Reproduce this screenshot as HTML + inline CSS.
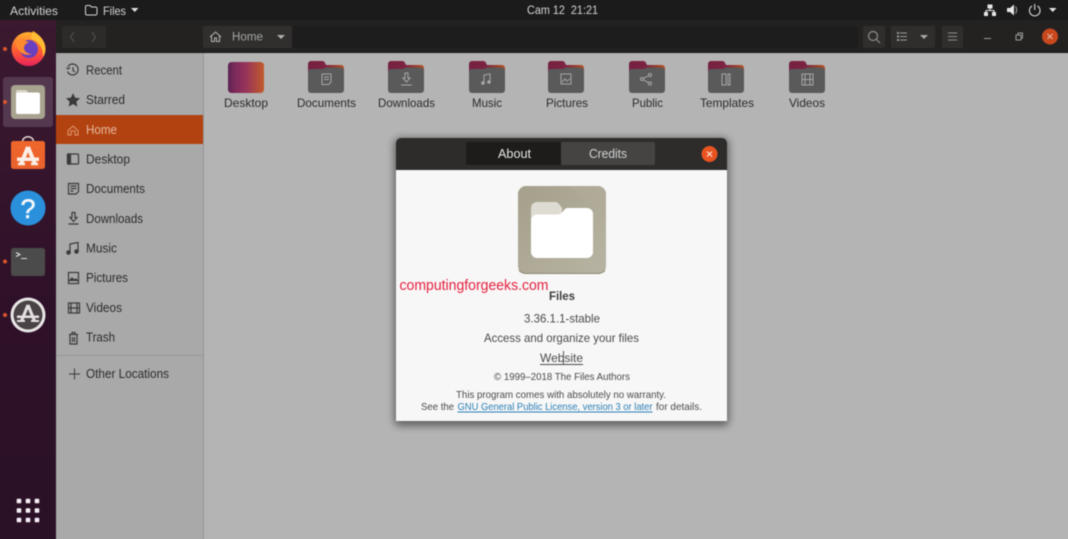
<!DOCTYPE html>
<html><head><meta charset="utf-8"><style>
html,body{margin:0;padding:0;width:1068px;height:539px;overflow:hidden;background:#b4b4b4}
#w{position:relative;width:1068px;height:539px;overflow:hidden;contain:strict}
svg{display:block;position:absolute;left:-10px;top:-10px;font-family:"Liberation Sans",sans-serif;filter:blur(.4px)}
text{white-space:pre}
.s text{font-size:12.5px;fill:#2c2c2c}
.f text{font-size:12px;fill:#2b2b2b;text-anchor:middle}
.ic{fill:none;stroke:#3a3a3a;stroke-width:1.2}
.fi{fill:none;stroke:#a8a8a8;stroke-width:1}
</style></head><body><div id="w">
<svg width="1088" height="559" viewBox="-10 -10 1088 559" xmlns="http://www.w3.org/2000/svg">
<defs>
<linearGradient id="dock" x1="0" y1="0" x2="0" y2="1"><stop offset="0" stop-color="#3b1a30"/><stop offset=".5" stop-color="#2f1129"/><stop offset="1" stop-color="#2a1126"/></linearGradient>
<linearGradient id="desk" x1="0" y1="0" x2="1" y2="0"><stop offset="0" stop-color="#5c2352"/><stop offset=".2" stop-color="#7d2a5b"/><stop offset=".5" stop-color="#96345a"/><stop offset="1" stop-color="#c25a2b"/></linearGradient>
<linearGradient id="tab" x1="0" y1="0" x2="1" y2="0"><stop offset="0" stop-color="#752043"/><stop offset=".5" stop-color="#7c2540"/><stop offset="1" stop-color="#b4521f"/></linearGradient>
<linearGradient id="ffx" x1="0" y1="0" x2="0" y2="1"><stop offset="0" stop-color="#ffb12e"/><stop offset=".55" stop-color="#ff5a32"/><stop offset="1" stop-color="#e8245c"/></linearGradient>
<linearGradient id="tile" x1="0" y1="0" x2="1" y2="1"><stop offset="0" stop-color="#a5a08b"/><stop offset="1" stop-color="#b8b4a3"/></linearGradient>
<linearGradient id="shop" x1="0" y1="0" x2="0" y2="1"><stop offset="0" stop-color="#f0672c"/><stop offset="1" stop-color="#e9622c"/></linearGradient>
<filter id="sh" x="-10%" y="-10%" width="120%" height="120%"><feGaussianBlur stdDeviation="4"/></filter>
<g id="folder">
<path d="M0 4a3 3 0 0 1 3-3h11a3 3 0 0 1 3 2l1 2h15a3 3 0 0 1 3 3v6H0z" fill="url(#tab)"/>
<path d="M0 12a3 3 0 0 1 3-3h12l3-1.500h15a3 3 0 0 1 3 3V30a3 3 0 0 1-3 3H3a3 3 0 0 1-3-3z" fill="#5a5a5a"/>
</g>
</defs>

<!-- backgrounds -->
<rect x="-10" y="-10" width="1088" height="559" fill="#b4b4b4"/>
<rect x="56" y="53" width="148" height="496" fill="#a9a9a9"/>
<rect x="203" y="53" width="1" height="496" fill="#979797"/>
<rect x="-10" y="20" width="66" height="529" fill="url(#dock)"/>
<rect x="56" y="20" width="1022" height="33" fill="#232221"/>
<rect x="56" y="52" width="1022" height="1" fill="#171717"/>
<rect x="-10" y="-10" width="1088" height="30" fill="#1b1b1b"/>

<!-- top bar -->
<text x="10" y="15" font-size="12" fill="#d5d5d5" textLength="48" lengthAdjust="spacingAndGlyphs">Activities</text>
<path d="M85.500 7a1.500 1.500 0 0 1 1.500-1.500h3l1.500 1.500h4a1.500 1.500 0 0 1 1.500 1.500v5a1.500 1.500 0 0 1-1.500 1.500H87a1.500 1.500 0 0 1-1.500-1.500z" fill="none" stroke="#d5d5d5"/>
<text x="103" y="15" font-size="12" fill="#d5d5d5" textLength="23" lengthAdjust="spacingAndGlyphs">Files</text>
<path d="M131 8h7.500l-3.750 4z" fill="#e0e0e0"/>
<text x="527" y="14" font-size="11.500" fill="#d5d5d5" textLength="71" lengthAdjust="spacingAndGlyphs">Cam 12  21:21</text>
<!-- network -->
<path d="M987.500 4.500h5v4h-5zM984 12h4v4h-4zM992 12h4v4h-4z" fill="#e6e6e6"/>
<path d="M990 8.500V10.500M986 12V10.500H994V12" fill="none" stroke="#e6e6e6"/>
<!-- volume -->
<path d="M1007 8h3l4-3.500v11L1010 12h-3z" fill="#e6e6e6"/>
<path d="M1015.500 6.500c1.500 2 1.500 5 0 7" fill="none" stroke="#aaa"/>
<!-- power -->
<path d="M1032 6a5.300 5.300 0 1 0 5.500 0M1034.700 4v6" fill="none" stroke="#d8d8d8" stroke-width="1.100"/>
<path d="M1049 8h7.500l-3.750 4z" fill="#e6e6e6"/>

<!-- title bar -->
<rect x="62" y="26" width="44" height="22" rx="2" fill="#2c2b2a"/>
<path d="M74 32l-3.500 5 3.500 5M92 32l3.500 5-3.500 5" fill="none" stroke="#4c4c4c" stroke-width="1.200"/>
<rect x="203" y="26" width="655" height="22" rx="2" fill="#1e1d1d"/>
<rect x="203" y="26" width="89" height="22" rx="2" fill="#302f2e"/>
<path d="M210 37l5.500-5 5.500 5M211.500 36v5.500h3V38h2v3.500h3V36" fill="none" stroke="#b5b5b5" stroke-width="1"/>
<text x="232" y="40.500" font-size="11.500" fill="#a6a6a6" textLength="31" lengthAdjust="spacingAndGlyphs">Home</text>
<path d="M277 35h8l-4 4z" fill="#b0b0b0"/>
<rect x="863" y="26" width="22" height="22" rx="2" fill="#2f2e2d"/>
<circle cx="873" cy="36" r="4.500" fill="none" stroke="#8e8e8e" stroke-width="1.200"/><path d="M876.500 39.500l3.500 3.500" stroke="#8e8e8e" stroke-width="1.200"/>
<rect x="891" y="26" width="44" height="22" rx="2" fill="#2f2e2d"/>
<path d="M897 32h2v2h-2zM897 35.500h2v2h-2zM897 39h2v2h-2z" fill="#9a9a9a"/><path d="M900 33h7M900 36.500h7M900 40h7" stroke="#9a9a9a"/>
<path d="M920 35h8l-4 4z" fill="#a8a8a8"/>
<rect x="942" y="26" width="21" height="22" rx="2" fill="#2f2e2d"/>
<path d="M948 33h9M948 36.500h9M948 40h9" stroke="#8e8e8e"/>
<path d="M984 38.500h7" stroke="#9a9a9a" stroke-width="1"/>
<path d="M1016 35h5v5h-5zM1018 35v-2h4.500v5H1021" fill="none" stroke="#9a9a9a"/>
<circle cx="1050" cy="36.500" r="8" fill="#c9481d"/>
<path d="M1047.500 34l5 5M1052.500 34l-5 5" stroke="#e0b5a5" stroke-width="1.100"/>

<!-- dock -->
<rect x="3" y="77" width="50" height="50" rx="3" fill="#54384f"/>
<circle cx="5" cy="49" r="2" fill="#d9562a"/><circle cx="5" cy="102" r="2" fill="#d9562a"/><circle cx="5" cy="261.500" r="2" fill="#d9562a"/><circle cx="5" cy="315" r="2" fill="#d9562a"/>
<!-- firefox -->
<circle cx="28.500" cy="49" r="17" fill="url(#ffx)"/>
<path d="M33 31c5 3 12 8 12.500 18 0 3-1 6-2.500 8 0-10-4-16-12-18 0-3 1-6 2-8z" fill="#ffbd33"/>
<circle cx="29" cy="49" r="9" fill="#6a3fc0"/>
<path d="M16 44c3-5 6-6 8-6l1 3 4 1c-4 2-5 4-5 6 0 3 3 6 8 6-5 2-11 0-13-4-2-2-3-4-3-6z" fill="#ff8a2e"/>
<!-- files -->
<rect x="11" y="85" width="34" height="34" rx="4" fill="#a8a38f"/>
<path d="M16 92a2 2 0 0 1 2-2h8l2 2.500h10a2 2 0 0 1 2 2V112a2 2 0 0 1-2 2H18a2 2 0 0 1-2-2z" fill="#ffffff"/>
<path d="M16 94v-2a2 2 0 0 1 2-2h8l2 2.500H18a2 2 0 0 0-2 1.500z" fill="#d8d4c8"/>
<!-- software -->
<path d="M22.500 142c0-7 11-7 11 0" fill="none" stroke="#e8dcd5" stroke-width="1.500"/>
<rect x="11" y="141" width="34" height="28" rx="2.500" fill="url(#shop)"/>
<path d="M28 147l-7 17M28 147l7 17" fill="none" stroke="#fbeee6" stroke-width="4"/>
<path d="M17 157.500h22v3.500H17z" fill="#fbeee6"/>
<path d="M18 164h7M31 164h7" stroke="#fbeee6" stroke-width="2.500"/>
<!-- help -->
<circle cx="28" cy="208" r="17.500" fill="#2a90dc"/>
<text x="28" y="218" font-size="27" fill="#f4f8fb" stroke="#f4f8fb" stroke-width=".5" text-anchor="middle">?</text>
<!-- terminal -->
<rect x="11" y="248" width="34" height="28" rx="2.500" fill="#4b4b4b"/>
<path d="M16 252.500l4 2-4 2" fill="none" stroke="#e8e8e8" stroke-width="1"/>
<path d="M21 258.500h6" stroke="#d8d8d8" stroke-width="1"/>
<!-- updater -->
<circle cx="28" cy="315" r="17.500" fill="#e9e6e6"/>
<circle cx="28" cy="315" r="14.500" fill="#4a4245"/>
<path d="M28 305l-6.500 16M28 305l6.500 16" fill="none" stroke="#e4e0e0" stroke-width="3"/>
<path d="M17 315.500h22v2.500H17zM17 320h8v2h-8zM31 320h8v2h-8z" fill="#e4e0e0"/>
<!-- apps grid -->
<g fill="#f6eef4"><rect x="16.700" y="498.700" width="4.600" height="4.600" rx=".8"/><rect x="25.700" y="498.700" width="4.600" height="4.600" rx=".8"/><rect x="34.700" y="498.700" width="4.600" height="4.600" rx=".8"/><rect x="16.700" y="508.200" width="4.600" height="4.600" rx=".8"/><rect x="25.700" y="508.200" width="4.600" height="4.600" rx=".8"/><rect x="34.700" y="508.200" width="4.600" height="4.600" rx=".8"/><rect x="16.700" y="517.700" width="4.600" height="4.600" rx=".8"/><rect x="25.700" y="517.700" width="4.600" height="4.600" rx=".8"/><rect x="34.700" y="517.700" width="4.600" height="4.600" rx=".8"/></g>

<!-- sidebar -->
<rect x="56" y="115" width="147" height="29" fill="#b2420f"/>
<rect x="57" y="355" width="146" height="1" fill="#979797"/>
<g class="s">
<text x="86" y="74.500" textLength="36" lengthAdjust="spacingAndGlyphs">Recent</text>
<text x="86" y="104" textLength="39" lengthAdjust="spacingAndGlyphs">Starred</text>
<text x="86" y="134" textLength="31" lengthAdjust="spacingAndGlyphs" style="fill:#e6b8a0">Home</text>
<text x="86" y="163.500" textLength="44" lengthAdjust="spacingAndGlyphs">Desktop</text>
<text x="86" y="193" textLength="59" lengthAdjust="spacingAndGlyphs">Documents</text>
<text x="86" y="223" textLength="57" lengthAdjust="spacingAndGlyphs">Downloads</text>
<text x="86" y="252.500" textLength="31" lengthAdjust="spacingAndGlyphs">Music</text>
<text x="86" y="282" textLength="42" lengthAdjust="spacingAndGlyphs">Pictures</text>
<text x="86" y="312" textLength="36" lengthAdjust="spacingAndGlyphs">Videos</text>
<text x="86" y="341.500" textLength="29" lengthAdjust="spacingAndGlyphs">Trash</text>
<text x="86" y="378" textLength="83" lengthAdjust="spacingAndGlyphs">Other Locations</text>
</g>
<g class="ic">
<path d="M68 66.500a5.500 5.500 0 1 1 -.5 5M66.500 67.500l1.500 1.500 2-1.500M73 67v3.500l2 1.500"/>
<path d="M73 94.500l1.700 3.700 4 .5-3 2.700.8 4-3.500-2-3.500 2 .8-4-3-2.700 4-.5z" fill="#3a3a3a"/>
<path d="M68 135v-4.500l5-4.500 5 4.500v4.500h-3v-4h-4v4z" style="stroke:#d98a60"/>
<rect x="67.500" y="154" width="11" height="10" rx="1"/><rect x="67.500" y="154" width="3" height="10" fill="#3a3a3a"/>
<path d="M68.500 183.500h10v8l-2.500 2.500h-7.500zM70.500 186h6M70.500 188.500h6M70.500 191h3"/>
<path d="M72 212.500h3v5h2l-3.500 4-3.500-4h2zM68.500 224h10"/>
<path d="M70 253v-9l8-1.500v9"/><circle cx="68.500" cy="252.500" r="1.700" fill="#3a3a3a"/><circle cx="76.500" cy="251.500" r="1.700" fill="#3a3a3a"/>
<rect x="68.500" y="272.500" width="10" height="11"/><path d="M69 281l3-3 2 2 2-1 2 2" fill="#3a3a3a"/>
<rect x="68.500" y="303" width="11" height="10"/><path d="M71 303v10M77 303v10M68.500 308h11" />
<path d="M69 334.500h9M72 334.500v-2h3v2M70 334.500v9.500h7v-9.500M72.500 337v5M74.500 337v5"/>
<path d="M69 374h11M74.500 368.500v11" style="stroke-width:1"/>
</g>

<!-- content folders -->
<rect x="228" y="62" width="36" height="31" rx="3.500" fill="url(#desk)"/>
<use href="#folder" x="308" y="60"/>
<use href="#folder" x="388" y="60"/>
<use href="#folder" x="469" y="60"/>
<use href="#folder" x="548" y="60"/>
<use href="#folder" x="629" y="60"/>
<use href="#folder" x="708" y="60"/>
<use href="#folder" x="789" y="60"/>
<g class="fi">
<path d="M322 74h9v8l-2.500 2.500H322zM324 77h5M324 79.500h5"/>
<path d="M405 73h3v5h2l-3.500 4-3.500-4h2zM401 85h11"/>
<path d="M484 83v-8l6-1v8"/><circle cx="483" cy="83" r="1.300" fill="#a8a8a8"/><circle cx="489" cy="82" r="1.300" fill="#a8a8a8"/>
<rect x="561" y="74" width="10" height="10"/><path d="M562 82l3-3 2 2 3-2" />
<circle cx="642" cy="79" r="1.500"/><circle cx="650" cy="75" r="1.500"/><circle cx="650" cy="83.500" r="1.500"/><path d="M643.500 78.300l5-2.500M643.500 79.800l5 3"/>
<rect x="722" y="74" width="4" height="11"/><rect x="728" y="74" width="2" height="11"/>
<rect x="802" y="74" width="11" height="11"/><path d="M805 74v11M810 74v11M802 79.500h11"/>
</g>
<g class="f">
<text x="246" y="107" textLength="44" lengthAdjust="spacingAndGlyphs">Desktop</text>
<text x="326.500" y="107" textLength="59" lengthAdjust="spacingAndGlyphs">Documents</text>
<text x="406.500" y="107" textLength="57" lengthAdjust="spacingAndGlyphs">Downloads</text>
<text x="487" y="107" textLength="30" lengthAdjust="spacingAndGlyphs">Music</text>
<text x="567" y="107" textLength="42" lengthAdjust="spacingAndGlyphs">Pictures</text>
<text x="647.500" y="107" textLength="31" lengthAdjust="spacingAndGlyphs">Public</text>
<text x="727" y="107" textLength="54" lengthAdjust="spacingAndGlyphs">Templates</text>
<text x="807" y="107" textLength="36" lengthAdjust="spacingAndGlyphs">Videos</text>
</g>

<!-- dialog shadow -->
<rect x="394" y="138" width="335" height="288" rx="6" fill="#000" opacity=".45" filter="url(#sh)"/>
<!-- dialog -->
<path d="M396 143a5 5 0 0 1 5-5h321a5 5 0 0 1 5 5v27H396z" fill="#2d2c2b"/>
<rect x="396" y="170" width="331" height="251" fill="#f7f7f7"/>
<rect x="466" y="142" width="95" height="23" rx="2" fill="#1d1c1b"/>
<rect x="561" y="142" width="94" height="23" rx="2" fill="#454443"/>
<text x="498" y="158" font-size="12.500" fill="#e6e6e6" textLength="33" lengthAdjust="spacingAndGlyphs">About</text>
<text x="589" y="158" font-size="12.500" fill="#d4d4d4" textLength="38" lengthAdjust="spacingAndGlyphs">Credits</text>
<circle cx="709.500" cy="154" r="8" fill="#e95420"/>
<path d="M707 151.500l5 5M712 151.500l-5 5" stroke="#fbe3d8" stroke-width="1.200"/>
<!-- app icon -->
<rect x="518" y="186" width="88" height="88" rx="8" fill="url(#tile)"/>
<path d="M570 186h28a8 8 0 0 1 8 8v30z" fill="#b0ac9a" opacity=".6"/>
<path d="M519 270q1 3 7 3.500h72q6-.5 7-3.500" fill="none" stroke="#8a8674" stroke-width="1"/>
<path d="M531 208a6 6 0 0 1 6-6h18a5 5 0 0 1 4 2l3 4v12h-31z" fill="#dedbd2"/>
<path d="M531 220a6 6 0 0 1 6-5.500h20q3 0 5-2l3-3.500q1-1 3-1h19a6 6 0 0 1 6 6v38a6 6 0 0 1-6 6h-50a6 6 0 0 1-6-6z" fill="#ffffff"/>
<!-- text -->
<text x="399.500" y="290" font-size="14.500" fill="#e5203f" textLength="149" lengthAdjust="spacingAndGlyphs">computingforgeeks.com</text>
<text x="549" y="300" font-size="12" font-weight="bold" fill="#3c3c3c" textLength="26" lengthAdjust="spacingAndGlyphs">Files</text>
<text x="524" y="322.500" font-size="12" fill="#4a4a4a" textLength="76" lengthAdjust="spacingAndGlyphs">3.36.1.1-stable</text>
<text x="484" y="342" font-size="12" fill="#4a4a4a" textLength="155" lengthAdjust="spacingAndGlyphs">Access and organize your files</text>
<text x="540" y="362" font-size="12" fill="#4a4a4a" textLength="43" lengthAdjust="spacingAndGlyphs">Website</text>
<rect x="540" y="364" width="43" height="1" fill="#4a4a4a"/>
<rect x="563" y="351" width="1" height="13" fill="#555"/>
<text x="494" y="380" font-size="10.500" fill="#4a4a4a" textLength="136" lengthAdjust="spacingAndGlyphs">© 1999–2018 The Files Authors</text>
<text x="456" y="398" font-size="10.500" fill="#4a4a4a" textLength="210" lengthAdjust="spacingAndGlyphs">This program comes with absolutely no warranty.</text>
<text x="421" y="410" font-size="10.500" fill="#4a4a4a" textLength="33" lengthAdjust="spacingAndGlyphs">See the</text>
<text x="457.500" y="410" font-size="10.500" fill="#2a7fb5" textLength="195" lengthAdjust="spacingAndGlyphs">GNU General Public License, version 3 or later</text>
<rect x="457.500" y="411.500" width="195" height="1" fill="#2a7fb5"/>
<text x="656" y="410" font-size="10.500" fill="#4a4a4a" textLength="46" lengthAdjust="spacingAndGlyphs">for details.</text>
</svg>
</div></body></html>
